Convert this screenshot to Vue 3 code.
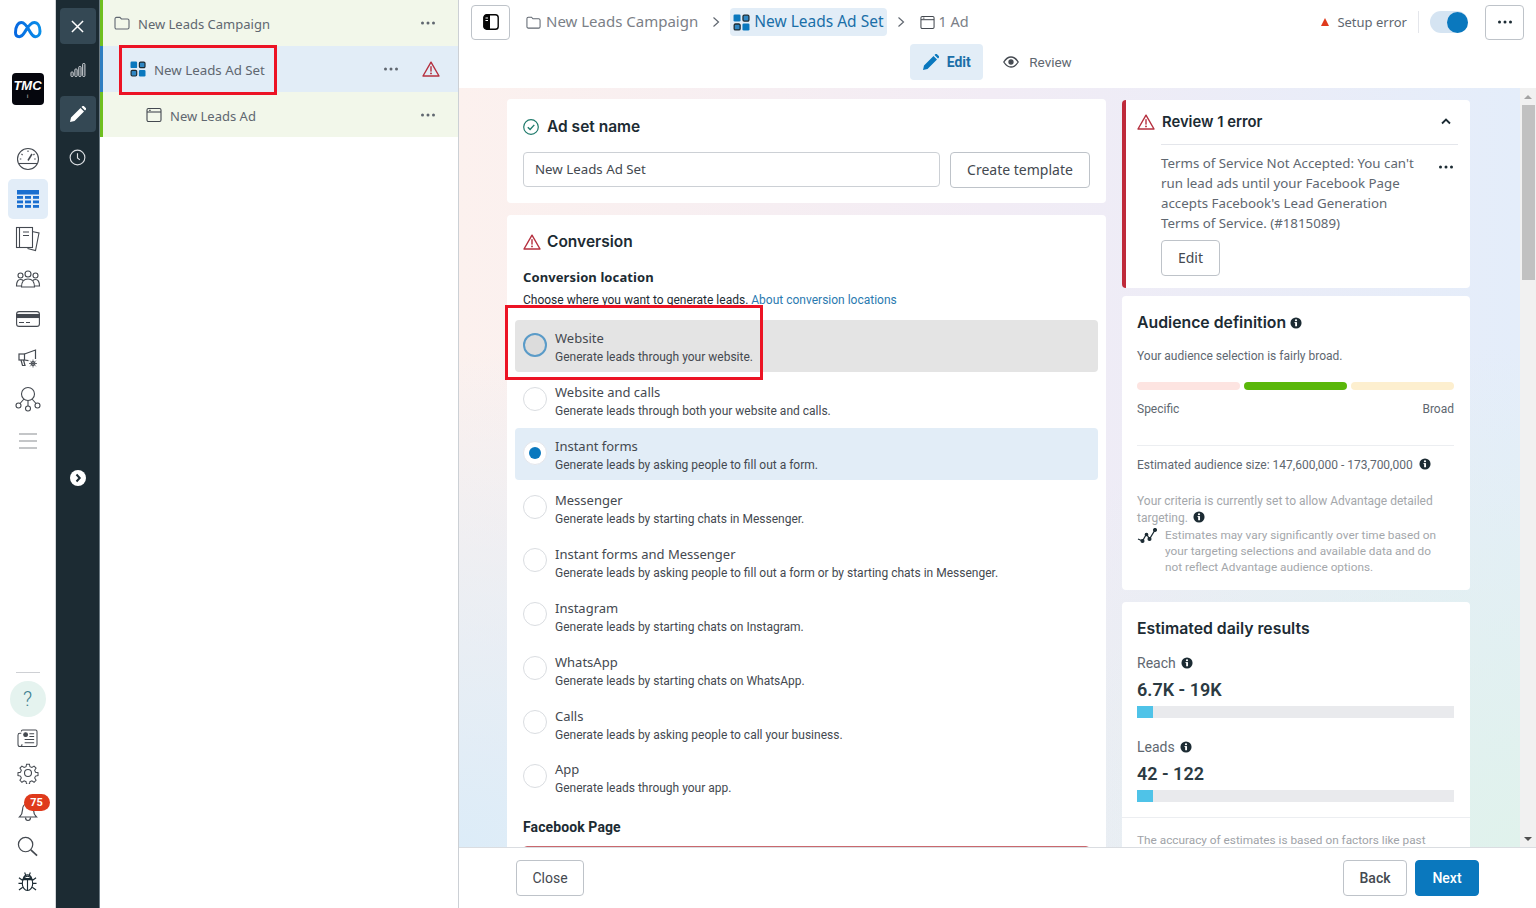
<template>
  <div class="page">
    <svg class="defs">
      <symbol id="info" viewBox="0 0 14 14"><circle cx="7" cy="7" r="6.5" fill="#1c2b33"/><rect x="6" y="6" width="2.2" height="4.8" fill="#fff"/><rect x="5.2" y="6" width="2" height="1.1" fill="#fff"/><circle cx="7" cy="3.8" r="1.3" fill="#fff"/></symbol>
      <symbol id="warn" viewBox="0 0 18 16"><path d="M9 1.2 17 15H1z" fill="none" stroke="#b5303f" stroke-width="1.4" stroke-linejoin="round"/><rect x="8.3" y="5.2" width="1.4" height="5.4" fill="#b5303f"/><circle cx="9" cy="12.4" r=".95" fill="#b5303f"/></symbol>
      <symbol id="dots" viewBox="0 0 16 4"><circle cx="2.5" cy="2" r="1.5"/><circle cx="8" cy="2" r="1.5"/><circle cx="13.5" cy="2" r="1.5"/></symbol>
      <symbol id="adset" viewBox="0 0 16 16"><rect x=".5" y=".5" width="6.6" height="6.6" rx="1.2" fill="#0a78be"/><rect x="9.4" y="1.1" width="5.6" height="5.6" rx="1.2" fill="#2f86c2" stroke="#1c2b33" stroke-width="1.2"/><rect x="1.1" y="9.4" width="5.6" height="5.6" rx="1.2" fill="#2f86c2" stroke="#1c2b33" stroke-width="1.2"/><rect x="8.9" y="8.9" width="6.6" height="6.6" rx="1.2" fill="#0a78be"/></symbol>
      <symbol id="folder" viewBox="0 0 16 14"><path d="M1 3c0-1 .6-1.6 1.5-1.6h3.4L7.4 3h6.1c.9 0 1.5.6 1.5 1.5v6.9c0 1-.6 1.6-1.5 1.6h-11C1.600 13 1 12.400 1 11.400z" fill="none" stroke="#606770" stroke-width="1.1"/></symbol>
      <symbol id="ad" viewBox="0 0 16 16"><rect x="1" y="1.500" width="14" height="13" rx="1.400" fill="none" stroke="#444950" stroke-width="1.100"/><path d="M1 5h14" stroke="#444950" stroke-width="1.100"/><path d="M3 3.300h1.800" stroke="#444950"/></symbol>
    </svg>

    <!-- global nav -->
    <aside class="rail">
      <svg class="meta" viewBox="0 0 30 20" width="30" height="20">
        <defs><linearGradient id="metaGrad" x1="0" y1="0" x2="1" y2="0"><stop offset="0" stop-color="#0668e1"/><stop offset="1" stop-color="#0a8ee8"/></linearGradient></defs>
        <path d="M2.500 12.500C2.500 6.500 5 2.500 8.500 2.500c3.800 0 6.500 5.500 9 10 1.500 2.700 3 4.200 5 4.200 2.600 0 4.500-2.300 4.500-5.500 0-5-2.300-8.700-5.800-8.700-4 0-7 5.500-9.700 10-1.600 2.700-3 4.200-5.200 4.200-2.300 0-3.800-1.700-3.800-4.200z" fill="none" stroke="url(#metaGrad)" stroke-width="3"/>
      </svg>
      <div class="tmc">TMC<small>i</small></div>
      <div class="rail-top">
        <div class="rail-item">
          <svg viewBox="0 0 24 24" width="24" height="24" fill="none" stroke="#444950" stroke-width="1.100"><circle cx="12" cy="12" r="10.500"/><path d="M3 16.500h18"/><path d="M12 13.500 16 7" stroke-width="1.500"/><path d="M12 3.500v2M5.500 7l1.500 1.400M18.500 7 17 8.400M3.800 12h2M18.200 12h2" stroke-dasharray="1.500 1"/></svg>
        </div>
        <div class="rail-item active">
          <svg viewBox="0 0 24 20" width="24" height="20" fill="#1a6fd0"><rect x="1" y="1" width="22" height="4.500"/><rect x="1" y="7" width="6" height="2.800"/><rect x="9" y="7" width="6" height="2.800"/><rect x="17" y="7" width="6" height="2.800"/><rect x="1" y="11.500" width="6" height="2.800"/><rect x="9" y="11.500" width="6" height="2.800"/><rect x="17" y="11.500" width="6" height="2.800"/><rect x="1" y="16" width="6" height="2.800"/><rect x="9" y="16" width="6" height="2.800"/><rect x="17" y="16" width="6" height="2.800"/></svg>
        </div>
        <div class="rail-item">
          <svg viewBox="0 0 26 26" width="26" height="26" fill="none" stroke="#444950" stroke-width="1.100"><path d="M17 5.500 24 7l-3.500 17.500-8-2"/><rect x="1.500" y="1.500" width="16" height="20" fill="#fff"/><path d="M4.500 1.500v20M8 6h6M8 9.500h6"/></svg>
        </div>
        <div class="rail-item">
          <svg viewBox="0 0 26 20" width="26" height="20" fill="none" stroke="#444950" stroke-width="1.100"><circle cx="13" cy="5" r="3"/><circle cx="5.500" cy="6.500" r="2.500"/><circle cx="20.500" cy="6.500" r="2.500"/><path d="M6.500 18c0-6 3-8 6.500-8s6.500 2 6.500 8z"/><path d="M6.500 17H1.500c0-4 1.500-6.500 4-6.500 1 0 2 .3 2.700 1M19.500 17h5c0-4-1.500-6.500-4-6.500-1 0-2 .3-2.700 1"/></svg>
        </div>
        <div class="rail-item">
          <svg viewBox="0 0 24 16" width="24" height="16" fill="none" stroke="#444950" stroke-width="1.100"><rect x=".6" y=".6" width="22.800" height="14.800" rx="2.500"/><rect x=".6" y="3.500" width="22.800" height="3" fill="#444950"/><path d="M3 11.500h5M10 11.500h4"/></svg>
        </div>
        <div class="rail-item">
          <svg viewBox="0 0 20 20" width="20" height="20" fill="none" stroke="#444950" stroke-width="1.200"><rect x="1" y="5" width="5.500" height="6"/><path d="M6.500 5 17.500 1v9M6.500 11l4 .6"/><path d="M3 11l1.500 5.500H7L5.500 11"/><circle cx="15" cy="14.500" r="2" stroke-width="1"/><path d="M15 10.500v8M11 14.500h8M12.200 11.700l5.600 5.600M17.800 11.700l-5.600 5.600" stroke-width=".8"/></svg>
        </div>
        <div class="rail-item">
          <svg viewBox="0 0 26 26" width="26" height="26" fill="none" stroke="#444950" stroke-width="1.100"><circle cx="13" cy="8" r="6.500"/><circle cx="3.500" cy="19.500" r="2.500"/><circle cx="13" cy="22.500" r="2.500"/><circle cx="22.500" cy="19.500" r="2.500"/><path d="M9 13 5 17.500M13 14.500V20M17 13l4 4.500"/></svg>
        </div>
        <div class="rail-item burger">
          <svg viewBox="0 0 18 16" width="18" height="16" stroke="#8a8d91" stroke-width="1.200"><path d="M0 1h18M0 8h18M0 15h18"/></svg>
        </div>
      </div>

      <div class="rail-bottom">
        <div class="rail-sep"></div>
        <div class="help">?</div>
        <div class="rail-slot news">
          <svg viewBox="0 0 22 20" width="21" height="19" fill="none" stroke="#444950" stroke-width="1.100"><path d="M4.500 2.500c0-1 .5-1.500 1.500-1.500h13.500c1 0 1.500.5 1.500 1.500v14c0 1.200-.8 2-2 2H4"/><path d="M4.500 4.500H3C1.800 4.500 1 5.300 1 6.500v9.500c0 1.500 1 2.500 2.200 2.500s2-1 2-2.500"/><circle cx="9" cy="6" r="2" fill="#444950"/><path d="M8 11h10M8 14.500h10M13 5h5M13 8h5"/></svg>
        </div>
        <div class="rail-slot gear">
          <svg viewBox="0 0 24 24" width="22" height="22" fill="none" stroke="#444950" stroke-width="1.200"><circle cx="12" cy="12" r="3.800"/><path d="M10.300 1.500h3.400l.6 3 2.300 1 2.600-1.700 2.400 2.400-1.700 2.600 1 2.300 3 .6v3.400l-3 .6-1 2.300 1.700 2.600-2.400 2.400-2.600-1.700-2.300 1-.6 3h-3.400l-.6-3-2.300-1-2.600 1.700-2.400-2.400 1.700-2.600-1-2.300-3-.6v-3.400l3-.6 1-2.300-1.700-2.600 2.400-2.400 2.600 1.700 2.300-1z" transform="translate(12 12) scale(.92) translate(-12 -12)"/></svg>
        </div>
        <div class="rail-slot bell">
          <svg viewBox="0 0 20 20" width="20" height="20" fill="none" stroke="#444950" stroke-width="1.200"><path d="M10 1.500c-3.500 0-5.500 3-5.500 6.500 0 3-1 5-3 7h17c-2-2-3-4-3-7 0-3.500-2-6.500-5.500-6.500z"/><path d="M7.500 15.500c0 2 1 3 2.500 3s2.500-1 2.500-3"/></svg>
          <span class="badge">75</span>
        </div>
        <div class="rail-slot search">
          <svg viewBox="0 0 22 22" width="21" height="21" fill="none" stroke="#444950" stroke-width="1.300"><circle cx="9" cy="9" r="7.500"/><path d="m14.500 14.500 6.500 6" stroke-width="1.800"/></svg>
        </div>
        <div class="rail-slot bug">
          <svg viewBox="0 0 20 22" width="19" height="21" fill="none" stroke="#1c2b33" stroke-width="1.200"><ellipse cx="10" cy="13" rx="5.500" ry="7.500"/><path d="M5.500 8c1-3 2.500-4 4.500-4s3.500 1 4.500 4zM10 8v12.500M7 1.500 8 4M13 1.500 12 4M1 7l4 3M19 7l-4 3M.5 13h4M19.500 13h-4M1 20l4-3M19 20l-4-3M4.500 9h11"/></svg>
        </div>
      </div>
    </aside>

    <!-- tool strip -->
    <nav class="strip">
      <button class="strip-btn on">
        <svg viewBox="0 0 14 14" width="13" height="13" stroke="#fff" stroke-width="1.600"><path d="m1 1 12 12M13 1 1 13"/></svg>
      </button>
      <button class="strip-btn">
        <svg viewBox="0 0 16 16" width="16" height="16" fill="none" stroke="#dadde1" stroke-width="1"><rect x="1" y="10" width="2.200" height="4.500" rx=".8"/><rect x="4.900" y="7" width="2.200" height="7.500" rx=".8"/><rect x="8.800" y="4.500" width="2.200" height="10" rx=".8"/><rect x="12.700" y="1.500" width="2.200" height="13" rx=".8"/></svg>
      </button>
      <button class="strip-btn on">
        <svg viewBox="0 0 16 16" width="16" height="16" fill="#fff"><path d="M0 16l1-4.500L10.500 2l3.500 3.500L4.500 15zM11.500 1l1-1c.4-.3 1-.3 1.300 0l2.200 2.200c.3.300.3.900 0 1.300l-1 1z"/></svg>
      </button>
      <button class="strip-btn clock">
        <svg viewBox="0 0 18 18" width="17" height="17" fill="none" stroke="#dadde1" stroke-width="1.200"><circle cx="9" cy="9" r="7.800"/><path d="M9 4.500V9.500l2.500 2"/></svg>
      </button>
      <div class="expand">
        <svg viewBox="0 0 16 16" width="16" height="16"><circle cx="8" cy="8" r="8" fill="#fff"/><path d="m6.500 4.500 3.200 3.500-3.200 3.500" fill="none" stroke="#1c2b33" stroke-width="2"/></svg>
      </div>
    </nav>

    <!-- tree -->
    <section class="tree">
      <div class="tree-row camp">
        <svg class="ico"><use href="#folder"/></svg>
        <span class="tree-name">New Leads Campaign</span>
        <svg class="dots"><use href="#dots"/></svg>
      </div>
      <div class="tree-row set">
        <svg class="ico"><use href="#adset"/></svg>
        <span class="tree-name">New Leads Ad Set</span>
        <svg class="dots"><use href="#dots"/></svg>
        <svg class="warn"><use href="#warn"/></svg>
      </div>
      <div class="tree-row adrow">
        <svg class="ico"><use href="#ad"/></svg>
        <span class="tree-name">New Leads Ad</span>
        <svg class="dots"><use href="#dots"/></svg>
      </div>
      <div class="mark mark-tree"></div>
    </section>

    <main class="main">
      <header class="head">
        <div class="head-top">
          <button class="square">
            <svg viewBox="0 0 16 16" width="16" height="16"><rect x=".8" y=".8" width="14.400" height="14.400" rx="2.800" fill="#fff" stroke="#050505" stroke-width="1.400"/><path d="M3.500.8h3.500v14.400H3.500C1.800 15.200.8 14 .8 12.500v-9C.8 2 1.800.8 3.500.8z" fill="#050505"/><path d="M2.500 4h2.500M2.500 6.500h2.500" stroke="#fff"/></svg>
          </button>
          <div class="crumbs">
            <svg class="crumb-ico"><use href="#folder"/></svg>
            <span class="crumb big">New Leads Campaign</span>
            <svg class="chev" viewBox="0 0 8 12"><path d="m1.500 1.500 5 4.500-5 4.500" fill="none" stroke="#606770" stroke-width="1.200"/></svg>
            <span class="crumb-pill"><svg class="pill-ico"><use href="#adset"/></svg>New Leads Ad Set</span>
            <svg class="chev second" viewBox="0 0 8 12"><path d="m1.500 1.500 5 4.500-5 4.500" fill="none" stroke="#606770" stroke-width="1.200"/></svg>
            <svg class="crumb-ico"><use href="#ad"/></svg>
            <span class="crumb">1 Ad</span>
          </div>
          <div class="status">
            <span class="tri"></span>
            <span class="status-txt">Setup error</span>
            <span class="vsep"></span>
            <span class="switch"><i></i></span>
            <button class="square more"><svg class="dots dark"><use href="#dots"/></svg></button>
          </div>
        </div>
        <div class="tabs">
          <button class="tab-edit">
            <svg viewBox="0 0 16 16" width="16" height="16" fill="#0a78be"><path d="M0 16l1-4.500L10.500 2l3.500 3.500L4.500 15zM11.500 1l1-1c.4-.3 1-.3 1.300 0l2.200 2.200c.3.300.3.900 0 1.300l-1 1z"/></svg>
            Edit
          </button>
          <div class="tab-review">
            <svg viewBox="0 0 16 12" width="16" height="12" fill="none" stroke="#444950" stroke-width="1.300"><path d="M.8 6C3 2.500 5.300 1 8 1s5 1.500 7.200 5C13 9.500 10.700 11 8 11S3 9.500.8 6z"/><circle cx="8" cy="6" r="2" fill="#444950"/></svg>
            Review
          </div>
        </div>
      </header>

      <div class="body">
        <div class="scroller">
          <div class="col-left">
            <section class="card name-card">
              <h2 class="card-title">
                <svg viewBox="0 0 16 16" width="16" height="16" fill="none" stroke="#1f7a6b" stroke-width="1.200"><circle cx="8" cy="8" r="7.300"/><path d="m4.800 8.200 2.300 2.300 4.200-4.600" stroke-width="1.400"/></svg>
                Ad set name
              </h2>
              <div class="name-row">
                <div class="input">New Leads Ad Set</div>
                <button class="btn">Create template</button>
              </div>
            </section>

            <section class="card conv-card">
              <h2 class="card-title tight"><svg class="warn big"><use href="#warn"/></svg>Conversion</h2>
              <div class="label">Conversion location</div>
              <p class="hint">Choose where you want to generate leads. <a>About conversion locations</a></p>
              <div class="options">
                <div v-for="o in options" :key="o.title" class="option" :class="o.state">
                  <span class="radio"></span>
                  <div class="opt-text">
                    <div class="opt-title">{{ o.title }}</div>
                    <div class="opt-sub">{{ o.sub }}</div>
                  </div>
                </div>
              </div>
              <div class="label fb">Facebook Page</div>
              <div class="fb-input"></div>
              <div class="mark mark-opt"></div>
            </section>
          </div>

          <div class="col-right">
            <section class="card review">
              <div class="review-head">
                <svg class="warn big"><use href="#warn"/></svg>
                <h3>Review 1 error</h3>
                <svg class="caret" viewBox="0 0 10 7" width="10" height="7"><path d="m1 5.500 4-4 4 4" fill="none" stroke="#1c2b33" stroke-width="1.800"/></svg>
              </div>
              <div class="review-body">
                <div class="review-row">
                  <p>Terms of Service Not Accepted: You can't run lead ads until your Facebook Page accepts Facebook's Lead Generation Terms of Service. (#1815089)</p>
                  <svg class="dots dark"><use href="#dots"/></svg>
                </div>
                <button class="btn small">Edit</button>
              </div>
            </section>

            <section class="card audience">
              <h3 class="side-title">Audience definition <svg class="info"><use href="#info"/></svg></h3>
              <p class="small-txt">Your audience selection is fairly broad.</p>
              <div class="meter"><span class="m1"></span><span class="m2"></span><span class="m3"></span></div>
              <div class="meter-labels"><span>Specific</span><span>Broad</span></div>
              <div class="rule"></div>
              <p class="size">Estimated audience size: 147,600,000 - 173,700,000 <svg class="info"><use href="#info"/></svg></p>
              <p class="muted">Your criteria is currently set to allow Advantage detailed targeting. <svg class="info"><use href="#info"/></svg></p>
              <div class="est-note">
                <svg viewBox="0 0 20 16" width="20" height="16" fill="none" stroke="#1c2b33" stroke-width="1.300"><path d="M1 11 5.500 13 9.500 6l3 5L18 2"/><circle cx="5.500" cy="13" r="1.400" fill="#1c2b33"/><circle cx="9.500" cy="6.500" r="1.200" fill="#1c2b33"/><circle cx="12.500" cy="11" r="1.400" fill="#1c2b33"/><circle cx="18" cy="2" r="1.400" fill="#1c2b33"/></svg>
                <p>Estimates may vary significantly over time based on your targeting selections and available data and do not reflect Advantage audience options.</p>
              </div>
            </section>

            <section class="card daily">
              <h3 class="side-title">Estimated daily results</h3>
              <div v-for="r in results" :key="r.label" class="result">
                <div class="res-label">{{ r.label }} <svg class="info"><use href="#info"/></svg></div>
                <div class="res-value">{{ r.value }}</div>
                <div class="res-bar"><span></span></div>
              </div>
              <div class="daily-foot">The accuracy of estimates is based on factors like past</div>
            </section>
          </div>
        </div>

        <div class="sbar">
          <span class="arrow up"></span>
          <span class="thumb"></span>
          <span class="arrow down"></span>
        </div>
      </div>

      <footer class="foot">
        <button class="btn foot-btn">Close</button>
        <div class="foot-right">
          <button class="btn foot-btn">Back</button>
          <button class="btn foot-btn primary">Next</button>
        </div>
      </footer>
    </main>
  </div>
</template>

<script setup>
const options = [
  { title: 'Website', sub: 'Generate leads through your website.', state: 'hover' },
  { title: 'Website and calls', sub: 'Generate leads through both your website and calls.' },
  { title: 'Instant forms', sub: 'Generate leads by asking people to fill out a form.', state: 'selected' },
  { title: 'Messenger', sub: 'Generate leads by starting chats in Messenger.' },
  { title: 'Instant forms and Messenger', sub: 'Generate leads by asking people to fill out a form or by starting chats in Messenger.' },
  { title: 'Instagram', sub: 'Generate leads by starting chats on Instagram.' },
  { title: 'WhatsApp', sub: 'Generate leads by starting chats on WhatsApp.' },
  { title: 'Calls', sub: 'Generate leads by asking people to call your business.' },
  { title: 'App', sub: 'Generate leads through your app.' },
]

const results = [
  { label: 'Reach', value: '6.7K - 19K' },
  { label: 'Leads', value: '42 - 122' },
]
</script>

<style>
html, body { margin: 0; height: 100%; overflow: hidden; background: #fff; }
</style>

<style scoped>
* { box-sizing: border-box; }
p, h2, h3 { margin: 0; }
button { font-family: inherit; cursor: pointer; }

.page {
  display: flex;
  width: 1536px;
  height: 908px;
  overflow: hidden;
  background: #fff;
  color: #1c2b33;
  font-family: Roboto, "Liberation Sans", sans-serif;
  font-size: 14px;
}
.defs { display: none; }

/* global nav */
.rail {
  width: 56px;
  flex: none;
  display: flex;
  flex-direction: column;
  align-items: center;
  padding-top: 20px;
  background: #fff;
  border-right: 1px solid #d3d5d8;
}
.meta { display: block; }
.tmc {
  width: 32px;
  height: 32px;
  margin-top: 33px;
  border-radius: 4px;
  background: #05060d;
  color: #fff;
  font: italic 700 13px/12px "Liberation Sans", sans-serif;
  text-align: center;
  padding-top: 7px;
}
.tmc small { display: block; font-size: 6px; line-height: 8px; font-style: normal; color: #999; }
.rail-top { margin-top: 34px; display: flex; flex-direction: column; align-items: center; }
.rail-item {
  width: 40px;
  height: 40px;
  display: flex;
  align-items: center;
  justify-content: center;
  border-radius: 5px;
  flex: none;
}
.rail-item.active { background: #e2edf8; }
.rail-item.burger { margin-top: 2px; }
.rail-bottom {
  margin-top: auto;
  display: flex;
  flex-direction: column;
  align-items: center;
  padding-bottom: 8px;
}
.rail-sep { width: 24px; height: 1px; background: #ced0d4; margin-bottom: 8px; }
.help {
  width: 36px;
  height: 36px;
  border-radius: 50%;
  background: #e5f3ef;
  color: #3d7f8f;
  font-size: 20px;
  font-weight: 300;
  display: flex;
  align-items: center;
  justify-content: center;
}
.rail-slot { position: relative; display: flex; align-items: center; justify-content: center; width: 40px; }
.news { height: 38px; margin-top: 2px; }
.gear { height: 32px; }
.bell { height: 38px; margin-top: 3px; padding-top: 2px; }
.search { height: 32px; }
.bug { height: 38px; }
.badge {
  position: absolute;
  top: 2px;
  left: 16px;
  min-width: 26px;
  height: 17px;
  padding: 0 5px;
  border-radius: 9px;
  background: #df3a1c;
  color: #fff;
  font-size: 11px;
  font-weight: 700;
  line-height: 17px;
  text-align: center;
}

/* tool strip */
.strip {
  width: 44px;
  flex: none;
  background: #1c2b33;
  border-right: 1px solid #6b7a83;
  display: flex;
  flex-direction: column;
  align-items: center;
  padding-top: 8px;
  gap: 8px;
}
.strip-btn {
  width: 36px;
  height: 36px;
  border: 0;
  border-radius: 4px;
  background: transparent;
  display: flex;
  align-items: center;
  justify-content: center;
  padding: 0;
}
.strip-btn.on { background: #344854; }
.clock { margin-top: -1px; }
.expand { margin-top: 287px; height: 16px; }

/* tree */
.tree {
  position: relative;
  width: 359px;
  flex: none;
  border-right: 1px solid #ccd0d5;
  background: #fff;
}
.tree-row {
  display: flex;
  align-items: center;
  height: 46px;
  border-left: 3px solid #6fbf1f;
  background: #f2f7ea;
  color: #606770;
  font-family: "Noto Sans", Roboto, sans-serif;
  font-size: 13px;
  padding-right: 22px;
}
.tree-row.set { background: #e2edf7; border-left-color: #2f7fc1; font-size: 13.300px; }
.tree-row.adrow { height: 45px; }
.camp { padding-left: 11px; }
.set { padding-left: 27px; padding-right: 18px; }
.adrow { padding-left: 43px; }
.ico { width: 16px; height: 16px; margin-right: 8px; flex: none; }
.tree-name { flex: 1; position: relative; top: 1px; }
.dots { width: 16px; height: 4px; fill: #606770; flex: none; }
.dots.dark { fill: #1c2b33; }
.set .dots { margin-right: 23px; }
.warn { width: 18px; height: 16px; flex: none; }
.warn.big { width: 18px; height: 16px; }

.mark { position: absolute; border: 3px solid #ec1324; pointer-events: none; z-index: 5; }
.mark-tree { left: 19px; top: 45px; width: 158px; height: 50px; }
.mark-opt { left: -2px; top: 90px; width: 258px; height: 75px; }

/* main column */
.main { flex: 1; min-width: 0; display: flex; flex-direction: column; }
.head { height: 88px; flex: none; background: #fff; }
.head-top {
  display: flex;
  align-items: center;
  height: 44px;
  padding: 0 12px 0 12px;
}
.square {
  width: 39px;
  height: 35px;
  border: 1px solid #bec3c9;
  border-radius: 4px;
  background: #fff;
  display: flex;
  align-items: center;
  justify-content: center;
  padding: 0;
  flex: none;
}
.crumbs {
  display: flex;
  align-items: center;
  margin-left: 16px;
  color: #7b8087;
  font-family: "Noto Sans", Roboto, sans-serif;
  font-size: 14.500px;
}
.crumb { padding-bottom: 2px; }
.crumb.big { font-size: 15px; }
.crumb-ico { width: 15px; height: 15px; margin-right: 5px; flex: none; }
.chev { width: 8px; height: 12px; margin: 0 10px 0 14px; flex: none; }
.chev.second { margin-left: 10px; }
.crumb-pill {
  display: flex;
  align-items: center;
  height: 28px;
  padding: 0 3px 2px;
  border-radius: 4px;
  background: #e2edf7;
  color: #1a6fa8;
  font-size: 15.500px;
  white-space: nowrap;
}
.chev + .crumb-ico { margin-left: 5px; margin-right: 4px; }
.pill-ico { width: 17px; height: 17px; margin: 2px 4px 0 0; flex: none; }
.status {
  margin-left: auto;
  display: flex;
  align-items: center;
  color: #606770;
  font-family: "Noto Sans", Roboto, sans-serif;
  font-size: 13px;
}
.tri {
  width: 0;
  height: 0;
  border-left: 4.500px solid transparent;
  border-right: 4.500px solid transparent;
  border-bottom: 8px solid #df3a1c;
  margin-right: 8px;
}
.vsep { width: 1px; height: 22px; background: #e4e6eb; margin: 0 11px 0 11px; }
.switch {
  width: 38px;
  height: 22px;
  border-radius: 11px;
  background: #d5e4f2;
  display: flex;
  justify-content: flex-end;
  align-items: center;
}
.switch i { width: 21px; height: 21px; border-radius: 50%; background: #0a78be; }
.more { margin-left: 17px; }
.tabs { display: flex; justify-content: center; align-items: center; margin-left: -13px; }
.tab-edit {
  width: 73px;
  height: 36px;
  border: 0;
  border-radius: 4px;
  background: #e2edf7;
  color: #1a6fa8;
  font-size: 14px;
  font-weight: 700;
  display: flex;
  align-items: center;
  justify-content: center;
  gap: 8px;
  padding: 0;
}
.tab-review { display: flex; align-items: center; gap: 10px; margin-left: 20px; color: #606770; font-size: 13.500px; }

.body { flex: 1; min-height: 0; display: flex; }
.scroller {
  flex: 1;
  min-width: 0;
  overflow: hidden;
  display: flex;
  align-items: flex-start;
  gap: 16px;
  padding: 11px 0 0 48px;
  background:
    radial-gradient(700px 500px at 0% 100%, #dcecf8 0%, rgba(220,236,248,0) 100%),
    radial-gradient(600px 500px at 100% 100%, #e0f2ec 0%, rgba(224,242,236,0) 100%),
    linear-gradient(90deg, #fcf1ee 0%, #f2ecf5 50%, #e4edfa 100%);
}
.col-left { width: 599px; flex: none; display: flex; flex-direction: column; gap: 12px; }
.col-right { width: 348px; flex: none; display: flex; flex-direction: column; gap: 8px; }
.card { background: #fff; border-radius: 4px; }

.card-title {
  display: flex;
  align-items: center;
  gap: 8px;
  font-family: Inter, Roboto, sans-serif;
  font-size: 15.500px;
  font-weight: 600;
  line-height: 20px;
}
.card-title.tight { gap: 6px; }
.name-card { height: 104px; padding: 18px 16px 0; }
.name-row { display: flex; gap: 10px; margin-top: 15px; }
.input {
  width: 417px;
  height: 35px;
  border: 1px solid #ccd0d5;
  border-radius: 4px;
  padding: 0 11px;
  line-height: 33px;
  color: #444950;
  font-family: "Noto Sans", Roboto, sans-serif;
  font-size: 13.300px;
}
.btn {
  height: 36px;
  padding: 0 15px;
  border: 1px solid #bec3c9;
  border-radius: 4px;
  background: #fff;
  color: #444950;
  font-size: 14px;
}
.name-row .btn { width: 140px; padding: 0 0 2px; font-family: "Noto Sans", Roboto, sans-serif; font-size: 14px; }

.conv-card { position: relative; height: 800px; padding: 17px 16px 0; }
.label { font-size: 14px; font-weight: 700; margin-top: 16px; line-height: 18px; color: #1c2b33; letter-spacing: .1px; }
.conv-card > .label:not(.fb) { font-family: "Noto Sans", Roboto, sans-serif; font-size: 13px; }
.hint { font-size: 12px; color: #1c2b33; line-height: 16px; margin-top: 6px; }
.hint a { color: #2a7ab0; }
.options { display: flex; flex-direction: column; gap: 2px; margin: 12px -8px 0; }
.option {
  height: 51.875px;
  display: flex;
  align-items: center;
  gap: 8px;
  padding: 0 8px;
  border-radius: 4px;
}
.option.hover { background: #e4e4e4; }
.option.selected { background: #e2edf7; }
.radio {
  width: 24px;
  height: 24px;
  border-radius: 50%;
  border: 1px solid #dadde1;
  background: #fff;
  flex: none;
  position: relative;
  top: -1px;
}
.hover .radio { background: #dcdcdc; border: 2px solid #5a9bc8; }
.selected .radio { border-color: #e4e6eb; }
.selected .radio::after {
  content: "";
  position: absolute;
  top: 5px;
  left: 5px;
  width: 12px;
  height: 12px;
  border-radius: 50%;
  background: #0a78be;
}
.opt-text { padding-top: 4px; }
.opt-title { font-family: "Noto Sans", Roboto, sans-serif; font-size: 13px; line-height: 18px; color: #444950; }
.opt-sub { font-size: 12px; line-height: 18px; color: #444950; margin-top: 1px; }
.label.fb { margin-top: 15px; }
.fb-input { height: 40px; margin-top: 10px; border: 1px solid #c9686e; border-radius: 4px; }

/* review card */
.review { height: 188px; border-left: 4px solid #bf2a3a; padding-left: 11px; margin-top: 1px; }
.review-head {
  display: flex;
  align-items: center;
  height: 44px;
  gap: 7px;
  padding-right: 19px;
  padding-bottom: 1px;
}
.review-head h3 { flex: 1; font-family: Inter, Roboto, sans-serif; font-size: 14.800px; font-weight: 600; }
.review-body { margin-left: 24px; margin-right: 12px; border-top: 1px solid #e4e6eb; padding-top: 8px; }
.review-row { display: flex; align-items: flex-start; justify-content: space-between; }
.review-row p { width: 258px; font-family: "Noto Sans", Roboto, sans-serif; font-size: 13.300px; line-height: 20px; color: #606770; }
.review-row .dots { margin: 12px 4px 0 0; }
.btn.small { width: 59px; margin-top: 7px; padding: 0 0 2px; font-family: "Noto Sans", Roboto, sans-serif; font-size: 14px; }

.audience { height: 294px; padding: 17px 16px 0 15px; }
.side-title {
  display: flex;
  align-items: center;
  gap: 4px;
  font-family: Inter, Roboto, sans-serif;
  font-size: 15.800px;
  font-weight: 600;
  line-height: 20px;
}
.info { width: 12px; height: 12px; vertical-align: -1px; flex: none; }
.small-txt { font-size: 12px; line-height: 16px; margin-top: 15px; color: #606770; }
.meter { display: flex; gap: 4px; margin-top: 18px; }
.meter span { flex: 1; height: 8px; border-radius: 4px; }
.m1 { background: #fde4e1; }
.m2 { background: #5ab70a; }
.m3 { background: #fdefcf; }
.meter-labels { display: flex; justify-content: space-between; font-size: 12px; line-height: 16px; color: #606770; margin-top: 11px; }
.rule { height: 1px; background: #eceef1; margin-top: 28px; }
.size { font-size: 12px; line-height: 16px; color: #606770; margin-top: 11px; }
.size .info { margin-left: 3px; }
.muted { font-size: 12px; line-height: 17px; color: #a4a7ab; margin-top: 20px; }
.muted .info { margin-left: 2px; }
.est-note { display: flex; gap: 8px; }
.est-note p { width: 275px; font-size: 11.800px; line-height: 16px; color: #a4a7ab; }
.est-note svg { flex: none; margin-top: 1px; }

.daily { height: 300px; margin-top: 4px; padding: 17px 16px 0 15px; }
.result { margin-top: 14px; }
.result + .result { margin-top: 19px; }
.res-label { font-size: 14px; line-height: 20px; color: #606770; }
.res-label .info { margin-left: 2px; }
.res-value { font-size: 18px; font-weight: 600; line-height: 24px; margin-top: 5px; color: #2b3a42; }
.res-bar { height: 12px; margin-top: 4px; background: #e9eaed; }
.res-bar span { display: block; width: 16px; height: 100%; background: #4fc3e8; }
.daily-foot {
  margin: 15px -16px 0 -15px;
  border-top: 1px solid #eceef1;
  padding: 14px 15px 0;
  font-size: 11.800px;
  line-height: 16px;
  color: #a0a3a8;
}

.sbar {
  width: 16px;
  flex: none;
  background: #f1f1f1;
  display: flex;
  flex-direction: column;
  align-items: center;
}
.thumb { width: 13px; height: 175px; background: #c1c1c1; margin-top: 6px; }
.arrow { width: 0; height: 0; border-left: 4px solid transparent; border-right: 4px solid transparent; }
.arrow.up { border-bottom: 4px solid #a3a3a3; margin-top: 7px; }
.arrow.down { border-top: 4px solid #505050; margin-top: auto; margin-bottom: 6px; }

.foot {
  height: 61px;
  flex: none;
  display: flex;
  align-items: flex-start;
  justify-content: space-between;
  padding: 12px 57px 0 57px;
  border-top: 1px solid #dadde1;
  background: #fff;
  z-index: 2;
}
.foot-right { display: flex; gap: 8px; }
.foot-btn { width: 68px; padding: 0; }
.foot-right .foot-btn { width: 64px; font-weight: 500; }
.primary { background: #0a78be; border-color: #0a78be; color: #fff; }
</style>
